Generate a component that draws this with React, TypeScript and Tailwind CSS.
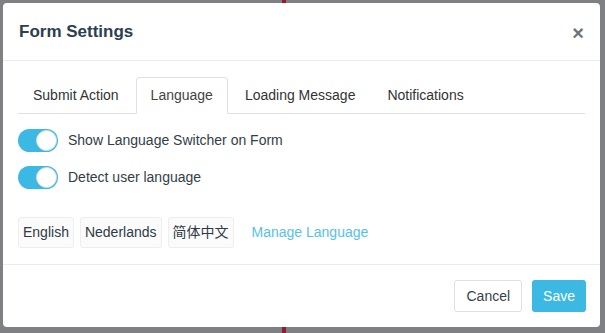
import { useState } from 'react';

const font = { fontFamily: '"Liberation Sans", Arial, sans-serif' };

function Toggle({ on, onChange }: { on: boolean; onChange: () => void }) {
  return (
    <button
      type="button"
      onClick={onChange}
      className={`relative h-[23px] w-[40px] shrink-0 rounded-full transition-colors ${on ? 'bg-[#3bb9e3]' : 'bg-[#dfe3e6]'}`}
    >
      <span
        className={`absolute top-[1px] h-[21px] w-[21px] rounded-full border border-[#d8dde1] bg-white transition-all ${on ? 'left-[18px]' : 'left-[1px]'}`}
      />
    </button>
  );
}

const tabs = ['Submit Action', 'Language', 'Loading Message', 'Notifications'];
const languages = ['English', 'Nederlands', '简体中文'];

export default function App() {
  const [active, setActive] = useState('Language');
  const [showSwitcher, setShowSwitcher] = useState(true);
  const [detect, setDetect] = useState(true);

  return (
    <div className="relative h-[333px] w-[605px] overflow-hidden bg-[#7f8084] p-[3px] pr-[5px]" style={font}>
      <div className="absolute left-[282px] top-0 h-full w-[4px] bg-[#8e1d2e]" />
      <div className="relative flex h-[324px] flex-col rounded-[4px] bg-white">
        <div className="flex h-[58px] items-center justify-between border-b border-[#e9ecef] pl-[16px] pr-[16px]">
          <h2 className="text-[17px] font-bold text-[#2c3e50]">Form Settings</h2>
          <button type="button" className="mt-[3px] text-[20px] font-bold leading-none text-[#6f7378]">×</button>
        </div>

        <div className="flex-1 px-[15px] pt-[16px]">
          <div className="flex gap-[2px] border-b border-[#dee2e6]">
            {tabs.map((tab) => (
              <button
                key={tab}
                type="button"
                onClick={() => setActive(tab)}
                className={`-mb-px h-[37px] rounded-t-[4px] border px-[14px] text-[14px] text-[#333] ${
                  active === tab ? 'border-[#dee2e6] border-b-white bg-white text-[#444]' : 'border-transparent'
                }`}
              >
                {tab}
              </button>
            ))}
          </div>

          <div className="mt-[15px] flex flex-col gap-[14px]">
            <label className="flex items-center gap-[10px] text-[14px] text-[#333d47]">
              <Toggle on={showSwitcher} onChange={() => setShowSwitcher(!showSwitcher)} />
              Show Language Switcher on Form
            </label>
            <label className="flex items-center gap-[10px] text-[14px] text-[#333d47]">
              <Toggle on={detect} onChange={() => setDetect(!detect)} />
              Detect user language
            </label>
          </div>

          <div className="mt-[28px] flex items-center gap-[6px]">
            {languages.map((lang) => (
              <span
                key={lang}
                className="flex h-[31px] items-center rounded-[3px] border border-[#eeeeee] bg-[#fbfbfb] px-[4px] text-[14px] text-[#2f3a44]"
                style={{ fontFamily: '"Liberation Sans", "Noto Sans CJK SC", Arial, sans-serif' }}
              >
                {lang}
              </span>
            ))}
            <a href="#" className="ml-[12px] text-[14px] text-[#56c1ea]">Manage Language</a>
          </div>
        </div>

        <div className="flex h-[63px] items-center justify-end gap-[10px] border-t border-[#e9ecef] px-[14px]">
          <button type="button" className="h-[32px] rounded-[3px] border border-[#dde1e5] bg-white px-[11px] text-[14px] text-[#3a3f48]">
            Cancel
          </button>
          <button type="button" className="h-[32px] rounded-[3px] bg-[#3bb9e3] px-[11px] text-[14px] text-white">
            Save
          </button>
        </div>
      </div>
    </div>
  );
}
